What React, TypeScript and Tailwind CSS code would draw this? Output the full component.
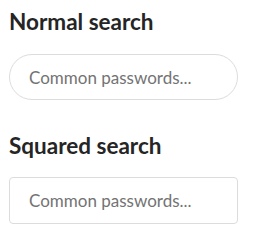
const App = () => {
  return (
    <div className="w-[255px] h-[248px] bg-white px-[9px] pt-[9px] font-['Lato',sans-serif]">
      <h3 className="text-[22.5px] leading-[26px] font-bold text-[#252525]">
        Normal search
      </h3>
      <input
        type="text"
        placeholder="Common passwords..."
        className="mt-[19px] w-[229px] h-[46px] rounded-full border border-[#dcdcdc] pl-[19px] pr-[18px] text-[17px] text-[#222] placeholder:text-[#737373] outline-none"
      />

      <h3 className="mt-[33px] text-[22.5px] leading-[26px] font-bold text-[#252525]">
        Squared search
      </h3>
      <input
        type="text"
        placeholder="Common passwords..."
        className="mt-[18px] w-[229px] h-[47px] rounded-[4px] border border-[#dcdcdc] pl-[19px] pr-[18px] text-[17px] text-[#222] placeholder:text-[#737373] outline-none"
      />
    </div>
  );
};

export default App;
